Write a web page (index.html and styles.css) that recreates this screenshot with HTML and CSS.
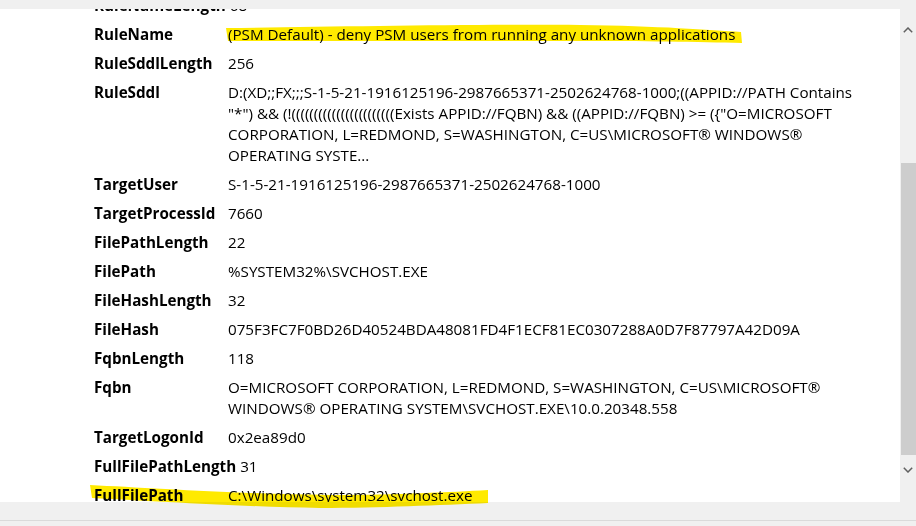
FILE: index.html
```html
<!DOCTYPE html>
<html>
<head>
<meta charset="utf-8">
<link rel="stylesheet" href="styles.css">
</head>
<body>
<div class="top-band"></div>
<div class="main">
  <div class="panel">
    <div class="list">
      <div class="row"><div class="label">RuleNameLength</div><div class="value">68</div></div>
      <div class="row"><div class="label">RuleName</div><div class="value">(PSM Default) - deny PSM users from running any unknown applications</div></div>
      <div class="row"><div class="label">RuleSddlLength</div><div class="value">256</div></div>
      <div class="row"><div class="label">RuleSddl</div><div class="value">D:(XD;;FX;;;S-1-5-21-1916125196-2987665371-2502624768-1000;((APPID://PATH Contains<br>"*") &amp;&amp; (!(((((((((((((((((((((((Exists APPID://FQBN) &amp;&amp; ((APPID://FQBN) &gt;= ({"O=MICROSOFT<br>CORPORATION, L=REDMOND, S=WASHINGTON, C=US\MICROSOFT® WINDOWS®<br>OPERATING SYSTE...</div></div>
      <div class="row"><div class="label">TargetUser</div><div class="value">S-1-5-21-1916125196-2987665371-2502624768-1000</div></div>
      <div class="row"><div class="label">TargetProcessId</div><div class="value">7660</div></div>
      <div class="row"><div class="label">FilePathLength</div><div class="value">22</div></div>
      <div class="row"><div class="label">FilePath</div><div class="value">%SYSTEM32%\SVCHOST.EXE</div></div>
      <div class="row"><div class="label">FileHashLength</div><div class="value">32</div></div>
      <div class="row"><div class="label">FileHash</div><div class="value">075F3FC7F0BD26D40524BDA48081FD4F1ECF81EC0307288A0D7F87797A42D09A</div></div>
      <div class="row"><div class="label">FqbnLength</div><div class="value">118</div></div>
      <div class="row"><div class="label">Fqbn</div><div class="value">O=MICROSOFT CORPORATION, L=REDMOND, S=WASHINGTON, C=US\MICROSOFT®<br>WINDOWS® OPERATING SYSTEM\SVCHOST.EXE\10.0.20348.558</div></div>
      <div class="row"><div class="label">TargetLogonId</div><div class="value">0x2ea89d0</div></div>
      <div class="row"><div class="label">FullFilePathLength</div><div class="value">31</div></div>
      <div class="row"><div class="label">FullFilePath</div><div class="value">C:\Windows\system32\svchost.exe</div></div>
    </div>
  </div>
  <div class="scrollbar">
    <svg class="chev chev-up" width="10" height="6" viewBox="0 0 10 6"><polyline points="0.8,5.2 5,1 9.2,5.2" fill="none" stroke="#606060" stroke-width="1.5"/></svg>
    <div class="thumb"></div>
    <svg class="chev chev-down" width="10" height="6" viewBox="0 0 10 6"><polyline points="0.8,0.8 5,5 9.2,0.8" fill="none" stroke="#606060" stroke-width="1.5"/></svg>
  </div>
</div>
<div class="bottom-band"></div>
<svg class="marker" width="916" height="526" viewBox="0 0 916 526">
  <path d="M226,28 C330,27 470,24 580,25 C660,26 710,30 741,32 L742,43 C700,42 640,41 580,41 C470,41 340,41 228,41 Z" fill="#ffea00"/>
  <path d="M90,485 C150,488 240,494 330,495 C400,495 450,492 488,490 L488,503 C440,505 380,508 320,508 C250,507 150,501 92,498 Z" fill="#ffea00"/>
</svg>
</body>
</html>
```
FILE: styles.css
```css
html, body {
  margin: 0;
  padding: 0;
}
body {
  width: 916px;
  height: 526px;
  overflow: hidden;
  background: #f0f0f0;
  font-family: "Open Sans", "Noto Sans", sans-serif;
  font-size: 15.2px;
  color: #000;
  position: relative;
}
.top-band {
  height: 9px;
}
.main {
  display: flex;
  height: 493px;
}
.panel {
  width: 900px;
  background: #fff;
  overflow: hidden;
}
.list {
  margin-top: -18px;
  padding-left: 94px;
}
.row {
  display: flex;
  padding: 4px 0;
  line-height: 21px;
}
.label {
  font-weight: 700;
  min-width: 130px;
  margin-right: 4px;
  white-space: nowrap;
}
.value {
  white-space: nowrap;
}
.scrollbar {
  width: 16px;
  display: flex;
  flex-direction: column;
  background: #f0f0f0;
}
.chev {
  display: block;
  margin-left: 3px;
}
.chev-up {
  margin-top: 18px;
}
.thumb {
  margin-top: 130px;
  margin-left: 1px;
  width: 15px;
  height: 292px;
  background: #cdcdcd;
}
.chev-down {
  margin-top: 12px;
}
.bottom-band {
  height: 18px;
  border-bottom: 1px solid #dadada;
}
.marker {
  position: absolute;
  left: 0;
  top: 0;
  pointer-events: none;
  mix-blend-mode: multiply;
}
```
